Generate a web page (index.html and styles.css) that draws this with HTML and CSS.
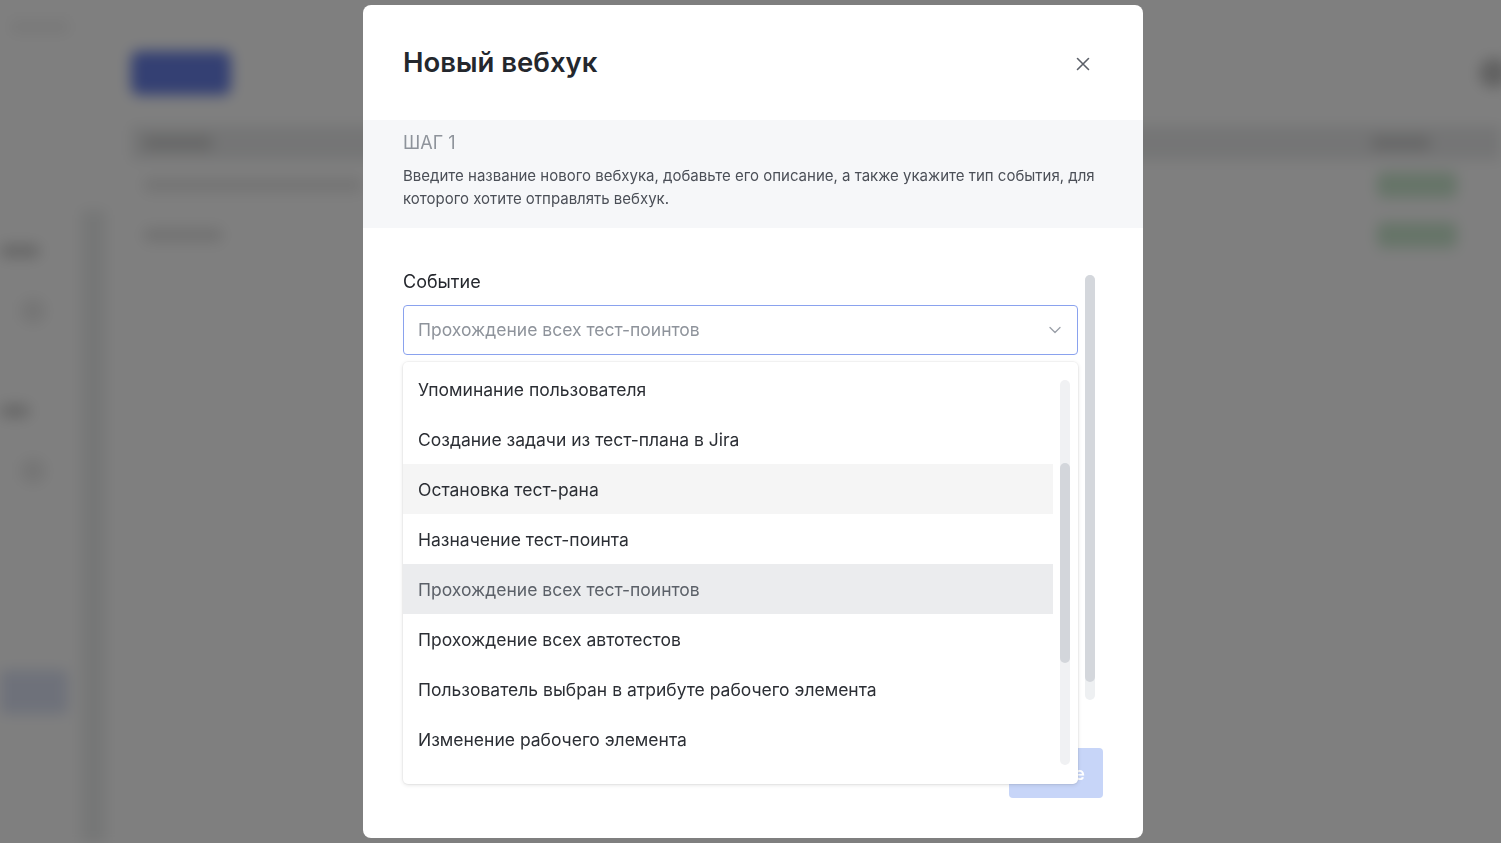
FILE: index.html
```html
<!DOCTYPE html>
<html lang="ru">
<head>
<meta charset="utf-8">
<title>Новый вебхук</title>
<link rel="stylesheet" href="styles.css">
</head>
<body>
<div class="app">
  <aside class="side">
    <div class="side-top"></div>
    <div class="side-text s1"></div>
    <div class="side-dot"></div>
    <div class="side-text s2"></div>
    <div class="side-dot"></div>
    <div class="side-active"></div>
  </aside>
  <div class="rail"></div>
  <main class="main">
    <div class="topbar">
      <div class="btn-blue"></div>
      <div class="avatar"></div>
    </div>
    <div class="thead">
      <span class="blob th1"></span>
      <span class="blob th2"></span>
    </div>
    <div class="trow">
      <span class="blob t1"></span>
      <span class="badge"></span>
    </div>
    <div class="trow">
      <span class="blob t2"></span>
      <span class="badge"></span>
    </div>
  </main>
</div>

<div class="overlay">
  <div class="modal">
    <div class="modal-head">
      <h1 class="modal-title">Новый вебхук</h1>
      <button class="close" aria-label="Закрыть">
        <svg width="14" height="14" viewBox="0 0 14 14"><path d="M1.5 1.5 L12.5 12.5 M12.5 1.5 L1.5 12.5" stroke="#5c6069" stroke-width="1.6" stroke-linecap="round" fill="none"/></svg>
      </button>
    </div>
    <div class="step">
      <div class="step-label">ШАГ 1</div>
      <p class="step-desc">Введите название нового вебхука, добавьте его описание, а также укажите тип события, для которого хотите отправлять вебхук.</p>
    </div>
    <div class="modal-body">
      <div class="scroll-area">
        <div class="form">
          <div class="field-label">Событие</div>
          <div class="select-wrap">
            <div class="select">
              <span class="select-value">Прохождение всех тест-поинтов</span>
              <svg class="chev" width="12" height="8" viewBox="0 0 12 8"><path d="M1 1.5 L6 6.5 L11 1.5" stroke="#9a9fa8" stroke-width="1.3" fill="none" stroke-linecap="round" stroke-linejoin="round"/></svg>
            </div>
            <div class="dropdown">
              <ul class="options">
                <li class="opt">Упоминание пользователя</li>
                <li class="opt">Создание задачи из тест-плана в Jira</li>
                <li class="opt hover">Остановка тест-рана</li>
                <li class="opt">Назначение тест-поинта</li>
                <li class="opt selected">Прохождение всех тест-поинтов</li>
                <li class="opt">Прохождение всех автотестов</li>
                <li class="opt">Пользователь выбран в атрибуте рабочего элемента</li>
                <li class="opt">Изменение рабочего элемента</li>
              </ul>
              <div class="inner-scroll"><div class="inner-thumb"></div></div>
            </div>
          </div>
        </div>
        <div class="vscroll"><div class="vthumb"></div></div>
      </div>
      <div class="footer">
        <button class="btn-next">Далее</button>
      </div>
    </div>
  </div>
</div>
</body>
</html>
```

FILE: styles.css
```css
* { box-sizing: border-box; }
html, body { margin: 0; padding: 0; width: 1501px; height: 843px; overflow: hidden; }
body { font-family: Inter, "Noto Sans", "Liberation Sans", sans-serif; background: #fff; }

/* blurred background application */
.app {
  display: flex;
  width: 1501px;
  height: 843px;
  background: #fff;
  filter: blur(7px);
}
.side {
  width: 80px;
  display: flex;
  flex-direction: column;
  padding-top: 20px;
  gap: 40px;
}
.side-top { width: 60px; height: 14px; margin-left: 10px; background: #f2f2f2; border-radius: 6px; }
.side-text { height: 14px; background: #d2d2d2; border-radius: 6px; }
.s1 { width: 40px; margin-top: 170px; }
.s2 { width: 30px; margin-top: 40px; }
.side-dot { width: 26px; height: 26px; border-radius: 50%; background: #ececec; margin-left: 20px; }
.side-active { width: 68px; height: 44px; margin-top: 146px; background: #dde3f5; border-radius: 4px; }
.rail { width: 26px; margin-top: 210px; background: #eceeee; border-left: 2px solid #f6f6f6; }
.main { flex: 1; padding: 48px 0 0 25px; display: flex; flex-direction: column; }
.topbar { display: flex; justify-content: space-between; align-items: center; height: 50px; margin-bottom: 28px; }
.btn-blue { width: 100px; height: 44px; background: #6880e6; border-radius: 8px; }
.avatar { width: 30px; height: 30px; border-radius: 50%; background: #c4c4c4; margin-right: -8px; }
.thead { height: 34px; background: #eaebec; display: flex; justify-content: space-between; align-items: center; padding: 0 70px 0 12px; }
.blob { height: 14px; border-radius: 6px; background: #cfcfcf; display: block; }
.th1 { width: 70px; }
.th2 { width: 60px; }
.trow { height: 50px; display: flex; justify-content: space-between; align-items: center; padding: 0 44px 0 12px; border-bottom: 1px solid #f4f4f4; }
.t1 { width: 220px; background: #e8e8e8; }
.t2 { width: 80px; background: #e4e4e4; }
.badge { width: 80px; height: 26px; border-radius: 6px; background: #cde9d1; }

/* overlay + modal */
.overlay {
  position: fixed;
  inset: 0;
  background: rgba(0, 0, 0, 0.5);
  display: flex;
  align-items: center;
  justify-content: center;
  padding-left: 5px;
}
.modal {
  width: 780px;
  height: 833px;
  background: #fff;
  border-radius: 8px;
  display: flex;
  flex-direction: column;
}
.modal-head {
  display: flex;
  justify-content: space-between;
  align-items: center;
  padding: 39px 40px 40px;
  height: 115px;
}
.modal-title {
  margin: 0;
  font-size: 27.5px;
  line-height: 36px;
  font-weight: 600;
  color: #24272d;
}
.close {
  border: 0;
  background: none;
  padding: 0;
  width: 14px;
  height: 14px;
  margin: 4px 13px 0 0;
  display: flex;
}
.step {
  background: #f6f7f9;
  padding: 11px 40px 18px;
  height: 108px;
}
.step-label {
  font-size: 18px;
  line-height: 24px;
  color: #8e939b;
  margin-bottom: 9px;
}
.step-desc {
  margin: 0;
  font-size: 15px;
  line-height: 23px;
  color: #4b4f57;
}
.modal-body {
  flex: 1;
  padding: 40px 40px 40px;
  display: flex;
  flex-direction: column;
}
.scroll-area {
  height: 440px;
  display: flex;
}
.form { width: 675px; }
.field-label {
  font-size: 18px;
  line-height: 24px;
  color: #24272d;
  margin-top: 2px;
  margin-bottom: 11px;
}
.select-wrap { position: relative; }
.select {
  height: 50px;
  border: 1px solid #8aa2ee;
  border-radius: 4px;
  display: flex;
  align-items: center;
  justify-content: space-between;
  padding: 0 16px 2px 14px;
}
.select-value { font-size: 17.5px; color: #8e939b; }
.chev { display: block; margin-top: 2px; }
.dropdown {
  position: absolute;
  top: 57px;
  left: 0;
  width: 675px;
  height: 422px;
  background: #fff;
  border-radius: 5px;
  box-shadow: 0 1px 4px rgba(0, 0, 0, 0.12), 0 0 0 1px rgba(0, 0, 0, 0.03);
  display: flex;
  padding-top: 2px;
  z-index: 2;
}
.options { list-style: none; margin: 0; padding: 0; width: 650px; }
.opt {
  height: 50px;
  display: flex;
  align-items: center;
  padding-left: 15px;
  font-size: 17.5px;
  color: #2b2e34;
}
.opt.hover { background: #f5f5f5; }
.opt.selected { background: #ebecee; color: #5b6068; }
.inner-scroll {
  width: 10px;
  height: 385px;
  margin: 16px 0 0 7px;
  background: #f0f1f3;
  border-radius: 5px;
  position: relative;
}
.inner-thumb {
  position: absolute;
  left: 0;
  top: 83px;
  width: 10px;
  height: 200px;
  background: #d3d6db;
  border-radius: 5px;
}
.vscroll {
  width: 10px;
  height: 425px;
  margin: 7px 0 0 7px;
  background: #eef0f2;
  border-radius: 5px;
  position: relative;
}
.vthumb {
  position: absolute;
  top: 0;
  left: 0;
  width: 10px;
  height: 407px;
  background: #d4d7dc;
  border-radius: 5px;
}
.footer {
  margin-top: 40px;
  display: flex;
  justify-content: flex-end;
}
.btn-next {
  width: 94px;
  height: 50px;
  border: 0;
  border-radius: 4px;
  background: #c7d5f8;
  color: #fff;
  font-family: inherit;
  font-size: 18px;
  font-weight: 600;
}
```
